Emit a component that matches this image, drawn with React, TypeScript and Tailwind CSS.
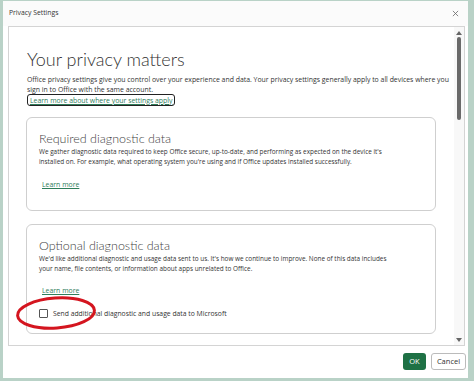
export default function App() {
  const body = "font-['Open_Sans',sans-serif]";
  const head = "font-['Lato',sans-serif] font-light";
  const small = "text-[6.9px] leading-[10px] text-[#333]";
  const card = "text-[6.4px] leading-[9.5px] text-[#333]";
  const link = "text-[6.9px] leading-[9px] text-[#2f7d5a] underline";
  return (
    <div className={`w-[474px] h-[381px] bg-[#b9d2c7] pl-[3px] pt-[1px] pr-[6px] pb-[3px] ${body}`}>
      <div className="w-full h-full bg-white flex flex-col">
        {/* Title bar */}
        <div className="h-[25px] flex items-center justify-between pl-[6px] pr-[9px] bg-[#fbfbfb]">
          <span className="text-[6.8px] text-[#333]">Privacy Settings</span>
          <svg width="7" height="7" viewBox="0 0 8 8" className="text-[#666]">
            <path d="M1 1 L7 7 M7 1 L1 7" stroke="currentColor" strokeWidth="0.9" />
          </svg>
        </div>

        {/* Scroll panel */}
        <div className="ml-[5px] mr-[3px] h-[320px] border border-[#d4d4d4] flex overflow-hidden">
          <div className="flex-1 pl-[18px] pt-[20px]">
            <h1 className={`${head} text-[18px] leading-[24px] text-[#333]`}>Your privacy matters</h1>
            <p className={`mt-[4px] ${small}`}>
              Office privacy settings give you control over your experience and data. Your privacy settings generally apply to all devices where you
              <br />
              sign in to Office with the same account.
            </p>
            <div className="mt-[-1px] w-fit border-[1.5px] border-[#222] rounded-[3px] px-[2px] py-[0.5px]">
              <div className={link}>Learn more about where your settings apply</div>
            </div>

            <div className="mt-[11px] ml-[-1px] w-[410px] h-[94px] border border-[#cfcfcf] rounded-[6px] px-[12px] pt-[13px]">
              <h2 className={`${head} text-[12.5px] leading-[16px] text-[#444]`}>Required diagnostic data</h2>
              <p className={card}>
                We gather diagnostic data required to keep Office secure, up-to-date, and performing as expected on the device it's
                <br />
                installed on. For example, what operating system you're using and if Office updates installed successfully.
              </p>
              <div className={`mt-[14px] ml-[3px] ${link}`}>Learn more</div>
            </div>

            <div className="mt-[13px] ml-[-1px] w-[410px] h-[110px] border border-[#cfcfcf] rounded-[6px] px-[12px] pt-[13px]">
              <h2 className={`${head} text-[12.5px] leading-[16px] text-[#444]`}>Optional diagnostic data</h2>
              <p className={card}>
                We'd like additional diagnostic and usage data sent to us. It's how we continue to improve. None of this data includes
                <br />
                your name, file contents, or information about apps unrelated to Office.
              </p>
              <div className={`mt-[13px] ml-[3px] ${link}`}>Learn more</div>
              <div className="relative mt-[14px] flex items-center gap-[5px]">
                <div className="w-[9px] h-[9px] border border-[#555] rounded-[1px] bg-white" />
                <span className="text-[6.8px] leading-[9px] text-[#333]">Send additional diagnostic and usage data to Microsoft</span>
                <svg className="absolute left-[-24px] top-[-14px]" width="82" height="36" viewBox="0 0 82 36">
                  <ellipse cx="41" cy="18" rx="38.5" ry="15" fill="none" stroke="#d4151f" strokeWidth="3" transform="rotate(-4 41 18)" />
                </svg>
              </div>
            </div>
          </div>

          {/* Scrollbar */}
          <div className="w-[10px] bg-[#f8f8f8] flex flex-col items-center pt-[4px] pb-[3px]">
            <svg width="6" height="4" viewBox="0 0 6 4"><path d="M3 0 L6 4 L0 4 Z" fill="#666" /></svg>
            <div className="mt-[2px] w-[4px] h-[83px] bg-[#6a6a6a] rounded-[2px]" />
            <div className="flex-1" />
            <svg width="6" height="4" viewBox="0 0 6 4"><path d="M0 0 L6 0 L3 4 Z" fill="#666" /></svg>
          </div>
        </div>

        {/* Footer */}
        <div className="flex-1 flex items-center justify-end gap-[5px] pr-[2px] pb-[1px]">
          <button className="w-[23px] h-[17px] bg-[#1e7145] rounded-[3px] text-white text-[7.5px]">OK</button>
          <button className="w-[35px] h-[17px] bg-white border border-[#bbb] rounded-[3px] text-[#333] text-[7.5px]">Cancel</button>
        </div>
      </div>
    </div>
  );
}
